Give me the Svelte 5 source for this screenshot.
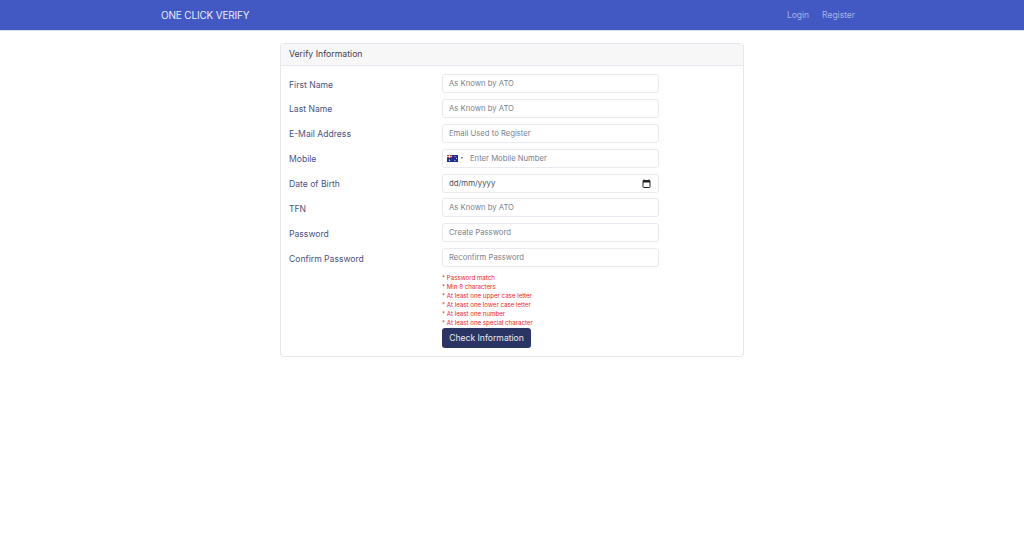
<script>
    const fields = [
        { label: 'First Name', placeholder: 'As Known by ATO' },
        { label: 'Last Name', placeholder: 'As Known by ATO' },
        { label: 'E-Mail Address', placeholder: 'Email Used to Register' },
        { label: 'Mobile', placeholder: 'Enter Mobile Number', phone: true },
        { label: 'Date of Birth', date: true },
        { label: 'TFN', placeholder: 'As Known by ATO' },
        { label: 'Password', placeholder: 'Create Password' },
        { label: 'Confirm Password', placeholder: 'Reconfirm Password' }
    ];

    const rules = [
        '* Password match',
        '* Min 8 characters',
        '* At least one upper case letter',
        '* At least one lower case letter',
        '* At least one number',
        '* At least one special character'
    ];
</script>

<nav class="navbar">
    <div class="nav-inner">
        <span class="brand">ONE CLICK VERIFY</span>
        <div class="links">
            <span>Login</span>
            <span>Register</span>
        </div>
    </div>
</nav>

<main>
    <div class="card">
        <div class="card-header">Verify Information</div>
        <div class="card-body">
            {#each fields as field}
                <div class="row">
                    <span class="label">{field.label}</span>
                    {#if field.phone}
                        <div class="input phone">
                            <svg class="flag" width="11" height="7" viewBox="0 0 22 14">
                                <rect width="22" height="14" fill="#1f2f8f" />
                                <rect width="10" height="6" fill="#b8364a" />
                                <path d="M0 3h10M5 0v6" stroke="#fff" stroke-width="1.4" />
                                <circle cx="5" cy="10.5" r="1.4" fill="#fff" />
                                <circle cx="16" cy="3" r="1" fill="#fff" />
                                <circle cx="19" cy="6.5" r="1" fill="#fff" />
                                <circle cx="16" cy="11" r="1" fill="#fff" />
                            </svg>
                            <span class="caret"></span>
                            <span class="placeholder">{field.placeholder}</span>
                        </div>
                    {:else if field.date}
                        <div class="input date">
                            <span>dd/mm/yyyy</span>
                            <svg width="9" height="9" viewBox="0 0 9 9">
                                <path d="M2 0.5v1.5M7 0.5v1.5" stroke="#222" stroke-width="1" />
                                <rect x="1" y="1.5" width="7" height="7" rx="0.7" fill="none" stroke="#222" stroke-width="1" />
                                <rect x="1" y="1.5" width="7" height="2" fill="#222" />
                            </svg>
                        </div>
                    {:else}
                        <div class="input"><span class="placeholder">{field.placeholder}</span></div>
                    {/if}
                </div>
            {/each}

            <div class="rules">
                {#each rules as rule}
                    <div>{rule}</div>
                {/each}
                <button type="button">Check Information</button>
            </div>
        </div>
    </div>
</main>

<style>
    :global(body) {
        margin: 0;
        background: #fff;
        font-family: Inter, "Open Sans", sans-serif;
    }

    .navbar {
        height: 31px;
        background: #4259c3;
        border-bottom: 1px solid #d5daf0;
        box-sizing: border-box;
    }

    .nav-inner {
        box-sizing: border-box;
        width: 702px;
        height: 30px;
        padding-right: 8px;
        padding-bottom: 1px;
        margin: 0 auto;
        display: flex;
        align-items: center;
        justify-content: space-between;
    }

    .brand {
        color: #e8ebf8;
        font-size: 10px;
        letter-spacing: -0.18px;
    }

    .links {
        display: flex;
        gap: 13px;
        color: #a6b2e8;
        font-size: 8.5px;
    }

    main {
        padding-top: 12px;
    }

    .card {
        width: 462px;
        height: 312px;
        margin: 0 auto;
        border: 1px solid #e6e8ef;
        border-radius: 3px;
    }

    .card-header {
        box-sizing: border-box;
        height: 22px;
        padding-left: 8px;
        padding-bottom: 1px;
        display: flex;
        align-items: center;
        background: #f7f7f7;
        border-bottom: 1px solid #e6e8ef;
        color: #3e4152;
        font-size: 8.7px;
    }

    .card-body {
        padding: 8px 8px 0;
    }

    .row {
        display: flex;
        align-items: center;
        height: 19px;
        margin-bottom: 5.9px;
    }

    .label {
        width: 153px;
        flex: none;
        color: #4b5280;
        font-size: 8.6px;
        padding-top: 2px;
    }

    .input {
        box-sizing: border-box;
        width: 217px;
        height: 19px;
        padding: 0 6px;
        display: flex;
        align-items: center;
        border: 1px solid #e8eaf0;
        border-radius: 3px;
        font-size: 7.7px;
        color: #4a4f5c;
    }

    .placeholder {
        color: #7b7f8c;
    }

    .phone {
        padding-left: 4px;
    }

    .caret {
        margin-left: 3px;
        margin-right: 7px;
        border-left: 1.5px solid transparent;
        border-right: 1.5px solid transparent;
        border-top: 2px solid #555;
    }

    .date {
        justify-content: space-between;
        padding-right: 7px;
        font-size: 7.8px;
    }

    .rules {
        margin-top: -0.2px;
        margin-left: 153px;
        color: #f02525;
        font-size: 6.15px;
        line-height: 9.1px;
    }

    button {
        display: block;
        height: 20px;
        width: 89px;
        padding: 0;
        border: none;
        border-radius: 3px;
        background: #2b3564;
        color: #e8e9f0;
        font-family: inherit;
        font-size: 8.6px;
    }
</style>
